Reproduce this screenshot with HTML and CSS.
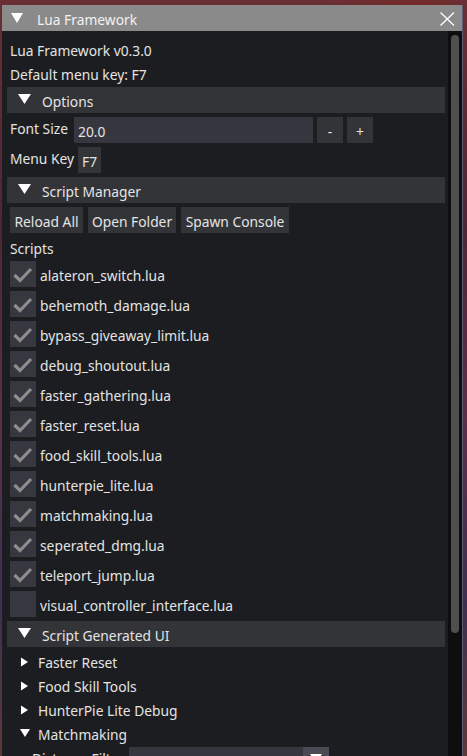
FILE: index.html
```html
<!DOCTYPE html>
<html>
<head>
<meta charset="utf-8">
<link rel="stylesheet" href="styles.css">
</head>
<body>
<div class="window">
  <div class="titlebar">
    <svg class="title-arrow" width="12" height="10" viewBox="0 0 12 10"><polygon points="0,0 12,0 6,10" fill="#ffffff"/></svg>
    <span class="title-text">Lua Framework</span>
    <svg class="close" width="15" height="14" viewBox="0 0 15 14"><path d="M0.5 0.5 L14 13.5 M14 0.5 L0.5 13.5" stroke="#ffffff" stroke-width="1.3" fill="none"/></svg>
  </div>
  <div class="body">
    <div class="content">
      <div class="text">Lua Framework v0.3.0</div>
      <div class="text">Default menu key: F7</div>
      <div class="header"><svg class="hdr-arrow" width="13" height="10" viewBox="0 0 13 10"><polygon points="0,0 13,0 6.5,10" fill="#ffffff"/></svg><span class="hdr-text">Options</span></div>
      <div class="row">
        <span class="label label-font">Font Size</span>
        <div class="frame input">20.0</div>
        <div class="frame btn sq">-</div>
        <div class="frame btn sq">+</div>
      </div>
      <div class="row">
        <span class="label label-key">Menu Key</span>
        <div class="frame btn">F7</div>
      </div>
      <div class="header"><svg class="hdr-arrow" width="13" height="10" viewBox="0 0 13 10"><polygon points="0,0 13,0 6.5,10" fill="#ffffff"/></svg><span class="hdr-text">Script Manager</span></div>
      <div class="row buttons">
        <div class="frame btn b-reload">Reload All</div>
        <div class="frame btn b-open">Open Folder</div>
        <div class="frame btn b-spawn">Spawn Console</div>
      </div>
      <div class="text">Scripts</div>
      <div class="check"><span class="box"><svg width="26" height="26" viewBox="0 0 26 26"><path d="M4.5 14 L10 19.5 L21 8" stroke="#8d8d8d" stroke-width="3.2" fill="none"/></svg></span><span class="check-text">alateron_switch.lua</span></div>
      <div class="check"><span class="box"><svg width="26" height="26" viewBox="0 0 26 26"><path d="M4.5 14 L10 19.5 L21 8" stroke="#8d8d8d" stroke-width="3.2" fill="none"/></svg></span><span class="check-text">behemoth_damage.lua</span></div>
      <div class="check"><span class="box"><svg width="26" height="26" viewBox="0 0 26 26"><path d="M4.5 14 L10 19.5 L21 8" stroke="#8d8d8d" stroke-width="3.2" fill="none"/></svg></span><span class="check-text">bypass_giveaway_limit.lua</span></div>
      <div class="check"><span class="box"><svg width="26" height="26" viewBox="0 0 26 26"><path d="M4.5 14 L10 19.5 L21 8" stroke="#8d8d8d" stroke-width="3.2" fill="none"/></svg></span><span class="check-text">debug_shoutout.lua</span></div>
      <div class="check"><span class="box"><svg width="26" height="26" viewBox="0 0 26 26"><path d="M4.5 14 L10 19.5 L21 8" stroke="#8d8d8d" stroke-width="3.2" fill="none"/></svg></span><span class="check-text">faster_gathering.lua</span></div>
      <div class="check"><span class="box"><svg width="26" height="26" viewBox="0 0 26 26"><path d="M4.5 14 L10 19.5 L21 8" stroke="#8d8d8d" stroke-width="3.2" fill="none"/></svg></span><span class="check-text">faster_reset.lua</span></div>
      <div class="check"><span class="box"><svg width="26" height="26" viewBox="0 0 26 26"><path d="M4.5 14 L10 19.5 L21 8" stroke="#8d8d8d" stroke-width="3.2" fill="none"/></svg></span><span class="check-text">food_skill_tools.lua</span></div>
      <div class="check"><span class="box"><svg width="26" height="26" viewBox="0 0 26 26"><path d="M4.5 14 L10 19.5 L21 8" stroke="#8d8d8d" stroke-width="3.2" fill="none"/></svg></span><span class="check-text">hunterpie_lite.lua</span></div>
      <div class="check"><span class="box"><svg width="26" height="26" viewBox="0 0 26 26"><path d="M4.5 14 L10 19.5 L21 8" stroke="#8d8d8d" stroke-width="3.2" fill="none"/></svg></span><span class="check-text">matchmaking.lua</span></div>
      <div class="check"><span class="box"><svg width="26" height="26" viewBox="0 0 26 26"><path d="M4.5 14 L10 19.5 L21 8" stroke="#8d8d8d" stroke-width="3.2" fill="none"/></svg></span><span class="check-text">seperated_dmg.lua</span></div>
      <div class="check"><span class="box"><svg width="26" height="26" viewBox="0 0 26 26"><path d="M4.5 14 L10 19.5 L21 8" stroke="#8d8d8d" stroke-width="3.2" fill="none"/></svg></span><span class="check-text">teleport_jump.lua</span></div>
      <div class="check"><span class="box"></span><span class="check-text">visual_controller_interface.lua</span></div>
      <div class="header"><svg class="hdr-arrow" width="13" height="10" viewBox="0 0 13 10"><polygon points="0,0 13,0 6.5,10" fill="#ffffff"/></svg><span class="hdr-text">Script Generated UI</span></div>
      <div class="tree"><svg class="tree-arrow" width="10" height="10" viewBox="0 0 10 10"><polygon points="1,0.5 8,5 1,9.5" fill="#ffffff"/></svg><span class="tree-text">Faster Reset</span></div>
      <div class="tree"><svg class="tree-arrow" width="10" height="10" viewBox="0 0 10 10"><polygon points="1,0.5 8,5 1,9.5" fill="#ffffff"/></svg><span class="tree-text">Food Skill Tools</span></div>
      <div class="tree"><svg class="tree-arrow" width="10" height="10" viewBox="0 0 10 10"><polygon points="1,0.5 8,5 1,9.5" fill="#ffffff"/></svg><span class="tree-text">HunterPie Lite Debug</span></div>
      <div class="tree"><svg class="tree-arrow open" width="10" height="10" viewBox="0 0 10 10"><polygon points="0,1 10,1 5,9" fill="#ffffff"/></svg><span class="tree-text">Matchmaking</span></div>
      <div class="row sub">
        <span class="label label-dist">Distance Filter</span>
        <div class="combo"><span class="combo-value"></span><span class="combo-arrow"><svg width="12" height="10" viewBox="0 0 12 10"><polygon points="0,0 12,0 6,9" fill="#ffffff"/></svg></span></div>
      </div>
    </div>
    <div class="scrollbar"><div class="grab"></div></div>
  </div>
</div>
</body>
</html>
```

FILE: styles.css
```css
html, body {
  margin: 0;
  padding: 0;
}
body {
  width: 467px;
  height: 756px;
  overflow: hidden;
  font-family: "Noto Sans", "DejaVu Sans", sans-serif;
  font-size: 13.8px;
  color: #e4e4e4;
  background:
    linear-gradient(90deg, rgba(0,0,0,0) 0 70%, rgba(120,40,30,0.6) 90%, rgba(0,0,0,0) 100%),
    linear-gradient(180deg, #6a2f35 0%, #4d2636 30%, #5a2f4a 55%, #3d3050 80%, #5c3a3a 100%);
}
.window {
  margin: 5px 0 0 2px;
  width: 460px;
  height: 760px;
  border-right: 1px solid #5e5d6e;
  background: #1c1d20;
  display: flex;
  flex-direction: column;
}
.titlebar {
  height: 26px;
  flex: none;
  background: #8a8a8a;
  display: flex;
  align-items: flex-start;
}
.title-arrow {
  margin-left: 9px;
  margin-top: 8px;
}
.title-text {
  margin-left: 14px;
  flex: 1;
  color: #f2f2f2;
  line-height: 26px;
  padding-top: 2px;
}
.close {
  margin-right: 7px;
  margin-top: 7px;
}
.body {
  flex: 1;
  display: flex;
  min-height: 0;
}
.content {
  flex: 1;
  padding: 8px 3px 0 8px;
  display: flex;
  flex-direction: column;
  gap: 4px;
  overflow: hidden;
}
.scrollbar {
  width: 14px;
  flex: none;
  background: #0e0e0f;
  padding: 4px 3px 0 3px;
  box-sizing: border-box;
}
.grab {
  height: 598px;
  border-radius: 4px;
  background: #4f4f50;
}
.text {
  height: 20px;
  flex: none;
  line-height: 20px;
  padding-top: 2px;
  box-sizing: border-box;
  white-space: nowrap;
}
.header {
  height: 26px;
  flex: none;
  margin-left: -3px;
  background: #333438;
  display: flex;
  align-items: flex-start;
  white-space: nowrap;
}
.hdr-arrow {
  margin-left: 11px;
  margin-right: 11px;
  margin-top: 7px;
}
.hdr-text {
  line-height: 26px;
  padding-top: 2px;
}
.row {
  height: 26px;
  flex: none;
  display: flex;
  align-items: flex-start;
  gap: 4px;
  white-space: nowrap;
}
.label {
  line-height: 20px;
  height: 20px;
  padding-top: 2px;
}
.label-font { width: 60px; }
.label-key { width: 64px; }
.frame {
  height: 26px;
  line-height: 26px;
  padding: 2px 4px 0 4px;
  box-sizing: border-box;
}
.input {
  width: 239px;
  background: #36363f;
}
.btn {
  background: #333438;
}
.sq {
  width: 26px;
  text-align: center;
  padding-left: 0;
  padding-right: 0;
}
.buttons {
  gap: 5px;
}
.b-reload, .b-open, .b-spawn {
  text-align: center;
  padding-left: 0;
  padding-right: 0;
}
.b-reload { width: 73px; }
.b-open { width: 88px; }
.b-spawn { width: 108px; }
.check {
  height: 26px;
  flex: none;
  display: flex;
  align-items: flex-start;
  gap: 4px;
  white-space: nowrap;
}
.check-text {
  line-height: 26px;
  padding-top: 2px;
}
.box {
  width: 26px;
  height: 26px;
  flex: none;
  background: #37373f;
  display: block;
}
.box svg { display: block; }
.tree {
  height: 20px;
  flex: none;
  display: flex;
  align-items: flex-start;
  padding-left: 10px;
  white-space: nowrap;
}
.tree-arrow {
  margin-right: 8px;
  margin-top: 6px;
}
.tree-arrow.open {
  margin-top: 5px;
}
.tree-text {
  line-height: 20px;
  padding-top: 2px;
}
.sub {
  padding-left: 22px;
  gap: 0;
}
.label-dist {
  width: 97px;
}
.combo {
  width: 200px;
  height: 26px;
  display: flex;
}
.combo-value {
  flex: 1;
  background: #36363f;
}
.combo-arrow {
  width: 26px;
  background: #4a4a55;
  display: flex;
  justify-content: center;
  padding-top: 7px;
  box-sizing: border-box;
}
```
